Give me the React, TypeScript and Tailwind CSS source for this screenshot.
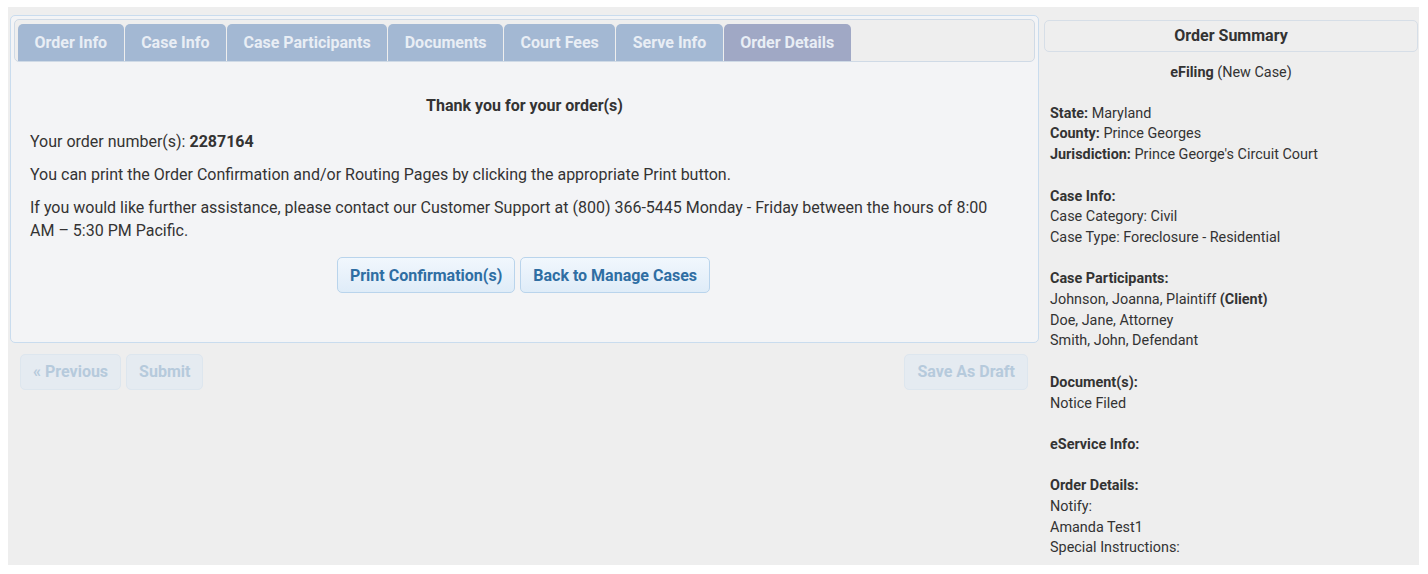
const tabs = [
  "Order Info",
  "Case Info",
  "Case Participants",
  "Documents",
  "Court Fees",
  "Serve Info",
  "Order Details",
];

function Tab({ label, active }: { label: string; active?: boolean }) {
  return (
    <div
      className={
        "flex h-[37px] items-center rounded-t-[5px] px-[16.5px] text-[16px] font-bold text-[#e9eef5] " +
        (active ? "bg-[#a0a8c5]" : "bg-[#a3b8d3]")
      }
    >
      {label}
    </div>
  );
}

function ActionButton({ label }: { label: string }) {
  return (
    <button className="h-[36px] rounded-[5px] border border-[#b9d4ec] bg-gradient-to-b from-[#f1f7fd] to-[#dfecf8] px-3 text-[16px] font-bold text-[#2f6ea3]">
      {label}
    </button>
  );
}

function DisabledButton({ label }: { label: string }) {
  return (
    <button className="h-[36px] rounded-[5px] border border-[#dde6ee] bg-[#e5ebf1] px-3 text-[16px] font-bold text-[#b6cadc]">
      {label}
    </button>
  );
}

export default function App() {
  return (
    <div className="h-[574px] w-[1428px] bg-white pt-[7px] pl-[8px] font-['Roboto',sans-serif]">
      <div className="flex h-[558px] w-[1411px] bg-[#eeeeee]">
        {/* main column */}
        <div className="flex w-[1032px] flex-col pl-[2px] pt-[8px]">
          <div className="h-[328px] w-[1029px] rounded-[5px] border border-[#c9dcee] bg-[#f3f4f6] p-[3px]">
            <div className="flex h-[43px] items-end gap-[1px] rounded-[5px] border border-[#cfdae6] bg-[#eeeeee] pl-[3px]">
              {tabs.map((t) => (
                <Tab key={t} label={t} active={t === "Order Details"} />
              ))}
            </div>
            <div className="pl-[16px] pr-[28px] pt-[32px] text-[16px] leading-[23px] text-[#333333]">
              <p className="pl-[12px] text-center font-bold">Thank you for your order(s)</p>
              <p className="mt-[13px]">
                Your order number(s): <span className="font-bold">2287164</span>
              </p>
              <p className="mt-[10px]">
                You can print the Order Confirmation and/or Routing Pages by clicking the appropriate Print button.
              </p>
              <p className="mt-[10px]">
                If you would like further assistance, please contact our Customer Support at (800) 366-5445 Monday - Friday between the hours of 8:00 AM – 5:30 PM Pacific.
              </p>
              <div className="mt-[15px] flex justify-center gap-[5px] pl-[10px]">
                <ActionButton label="Print Confirmation(s)" />
                <ActionButton label="Back to Manage Cases" />
              </div>
            </div>
          </div>
          <div className="mt-[11px] flex justify-between pl-[10px] pr-[12px]">
            <div className="flex gap-[5px]">
              <DisabledButton label="« Previous" />
              <DisabledButton label="Submit" />
            </div>
            <DisabledButton label="Save As Draft" />
          </div>
        </div>

        {/* order summary */}
        <div className="flex-1 pt-[13px] pl-[4px] pr-[1px] text-[14.4px] leading-[20.7px] text-[#333333]">
          <div className="flex h-[32px] items-center justify-center rounded-[5px] border border-[#d6dee7] text-[16px] font-bold">
            Order Summary
          </div>
          <p className="mt-[11px] text-center">
            <span className="font-bold">eFiling</span> (New Case)
          </p>
          <div className="mt-[20px] pl-[6px]">
            <p><span className="font-bold">State:</span> Maryland</p>
            <p><span className="font-bold">County:</span> Prince Georges</p>
            <p><span className="font-bold">Jurisdiction:</span> Prince George's Circuit Court</p>
            <p className="mt-[20.7px] font-bold">Case Info:</p>
            <p>Case Category: Civil</p>
            <p>Case Type: Foreclosure - Residential</p>
            <p className="mt-[20.7px] font-bold">Case Participants:</p>
            <p>Johnson, Joanna, Plaintiff <span className="font-bold">(Client)</span></p>
            <p>Doe, Jane, Attorney</p>
            <p>Smith, John, Defendant</p>
            <p className="mt-[20.7px] font-bold">Document(s):</p>
            <p>Notice Filed</p>
            <p className="mt-[20.7px] font-bold">eService Info:</p>
            <p className="mt-[20.7px] font-bold">Order Details:</p>
            <p>Notify:</p>
            <p>Amanda Test1</p>
            <p>Special Instructions:</p>
          </div>
        </div>
      </div>
    </div>
  );
}
